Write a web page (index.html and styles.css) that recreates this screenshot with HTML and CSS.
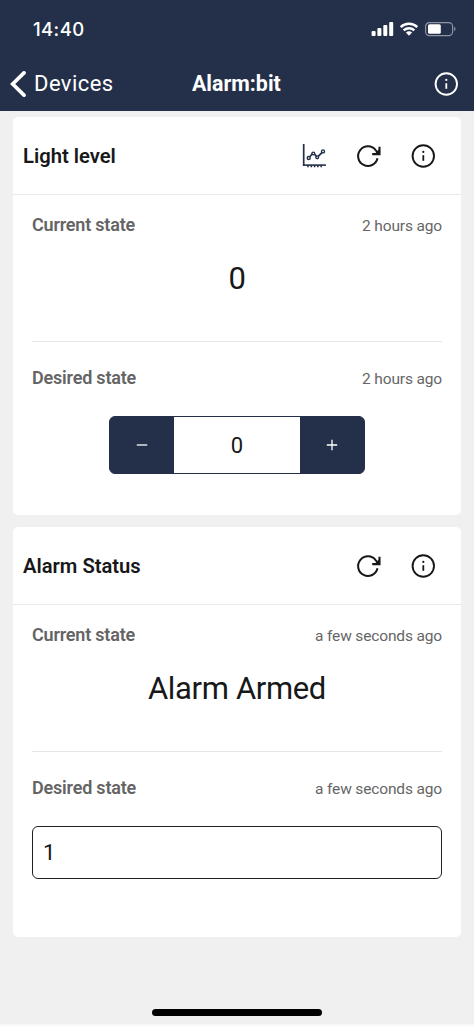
FILE: index.html
```html
<!DOCTYPE html>
<html lang="en">
<head>
<meta charset="utf-8">
<meta name="viewport" content="width=device-width">
<title>Alarm:bit</title>
<link rel="stylesheet" href="styles.css">
</head>
<body>
<svg class="defs" aria-hidden="true">
  <symbol id="info" viewBox="0 0 26 26">
    <circle cx="13.3" cy="13" r="10.7" fill="none" stroke="currentColor" stroke-width="1.9"/>
    <circle cx="13.3" cy="8.9" r="1.1" fill="currentColor"/>
    <path d="M13.3 12.2v5.6" stroke="currentColor" stroke-width="1.8"/>
  </symbol>
  <symbol id="reload" viewBox="0 0 26 26">
    <path d="M22.5 15.3A9.8 9.8 0 1 1 20.8 7.3L24 10.8" fill="none" stroke="currentColor" stroke-width="2"/>
    <path d="M24.5 3.8V11.1H17.2" fill="none" stroke="currentColor" stroke-width="2.1"/>
    <path d="M24.5 6v5.1h-5.1z" fill="currentColor"/>
  </symbol>
</svg>
<header class="topbar">
  <div class="statusbar">
    <span class="clock">14:40</span>
    <svg class="signals" width="86" height="16" viewBox="0 0 86 16">
      <g fill="#fff">
        <rect x="0.6" y="9" width="4" height="5" rx="1"/>
        <rect x="6.4" y="6" width="4" height="8" rx="1"/>
        <rect x="12.3" y="3" width="4" height="11" rx="1"/>
        <rect x="18.2" y="0" width="4" height="14" rx="1"/>
        <path d="M38 13.8l-3.1-3.2a4.4 4.4 0 0 1 6.2 0z"/>
        <rect x="57" y="2.2" width="12.8" height="9.6" rx="1.6"/>
      </g>
      <g fill="none" stroke="#fff" stroke-width="2.5">
        <path d="M29.7 5.1a12 12 0 0 1 16.6 0"/>
        <path d="M32.7 8.4a7.7 7.7 0 0 1 10.6 0"/>
      </g>
      <rect x="54.6" y=".6" width="27" height="13" rx="3.8" fill="none" stroke="#8d95a4" stroke-width="1.2"/>
      <path d="M83.2 4.8c1.7.6 1.7 3.8 0 4.4z" fill="#8d95a4"/>
    </svg>
  </div>
  <nav class="navbar">
    <a class="back">
      <svg width="16" height="26" viewBox="0 0 16 26"><path d="M14 1.9L2.7 13 14 24.1" fill="none" stroke="#fff" stroke-width="3.7" stroke-linecap="round"/></svg>
      <span class="back-label">Devices</span>
    </a>
    <h1 class="title">Alarm:bit</h1>
    <svg class="icon nav-info"><use href="#info"/></svg>
  </nav>
</header>
<main class="content">
  <section class="card">
    <div class="card-head">
      <h2 class="card-title">Light level</h2>
      <svg class="icon chart" viewBox="0 0 26 26">
        <g fill="none" stroke="#243049">
          <path d="M3.7 1V22.8" stroke-width="1.7"/>
          <path d="M2.9 22.1H25.9" stroke-width="1.6"/>
          <path d="M8 22v2.3M11.3 22v2.3M14.6 22v2.3M17.9 22v2.3M21.2 22v2.3" stroke-width="1.6"/>
          <path d="M9.8 13.8l2.6-3M14.4 11l2.1 2.4M18.2 13.4l4-4.1" stroke-width="1.7"/>
          <circle cx="8.7" cy="15" r="1.5" stroke-width="1.4"/>
          <circle cx="13.3" cy="10.5" r="1.4" stroke-width="1.4"/>
          <circle cx="17.2" cy="14.3" r="1.4" stroke-width="1.4"/>
          <circle cx="23" cy="8.4" r="1.5" stroke-width="1.4"/>
        </g>
      </svg>
      <svg class="icon"><use href="#reload"/></svg>
      <svg class="icon"><use href="#info"/></svg>
    </div>
    <div class="state current">
      <div class="row"><span class="label">Current state</span><span class="time">2 hours ago</span></div>
      <div class="value">0</div>
    </div>
    <div class="state desired">
      <div class="row"><span class="label">Desired state</span><span class="time">2 hours ago</span></div>
      <div class="stepper">
        <span class="step"><svg width="12" height="12"><path d="M.8 6h10.4" stroke="#fff" stroke-width="1.3"/></svg></span>
        <span class="step-value">0</span>
        <span class="step"><svg width="12" height="12"><path d="M.8 6h10.4M6 .8v10.4" stroke="#fff" stroke-width="1.3"/></svg></span>
      </div>
    </div>
  </section>
  <section class="card">
    <div class="card-head">
      <h2 class="card-title">Alarm Status</h2>
      <svg class="icon"><use href="#reload"/></svg>
      <svg class="icon"><use href="#info"/></svg>
    </div>
    <div class="state current">
      <div class="row"><span class="label">Current state</span><span class="time">a few seconds ago</span></div>
      <div class="value">Alarm Armed</div>
    </div>
    <div class="state desired last">
      <div class="row"><span class="label">Desired state</span><span class="time">a few seconds ago</span></div>
      <div class="field">1</div>
    </div>
  </section>
</main>
<footer class="home"><div class="home-bar"></div></footer>
</body>
</html>
```

FILE: styles.css
```css
* { box-sizing: border-box; }

body {
  margin: 0;
  height: 1026px;
  display: flex;
  flex-direction: column;
  background: #f0f0f0;
  color: #17181a;
  font-family: Roboto, "Liberation Sans", sans-serif;
  overflow: hidden;
}

.defs { position: absolute; width: 0; height: 0; }
.icon { width: 26px; height: 26px; display: block; flex: none; }

.topbar {
  height: 111px;
  background: #243049;
  color: #fff;
}

.statusbar {
  height: 58px;
  padding: 0 17px 0 33px;
  display: flex;
  align-items: center;
  justify-content: space-between;
}

.clock {
  font: 500 18.5px/24px Inter, sans-serif;
  letter-spacing: 0.4px;
}

.signals { margin-top: 2px; }

.navbar {
  height: 52px;
  padding: 0 15px 0 10px;
  display: grid;
  grid-template-columns: 182px 1fr 26px;
  align-items: center;
}

.back { display: flex; align-items: center; gap: 8px; }
.back-label { font-size: 22px; line-height: 26px; letter-spacing: 0.45px; }
.title { margin: 0; font-size: 21.4px; line-height: 26px; font-weight: 700; }

.content {
  padding: 6px 13px 0;
  display: flex;
  flex-direction: column;
  gap: 12px;
}

.card {
  background: #fff;
  border-radius: 5px;
}

.card-head {
  height: 78px;
  padding: 0 25px 0 10px;
  display: flex;
  align-items: center;
  gap: 29px;
  border-bottom: 1px solid #e9e9e9;
}

.card-title {
  margin: 0;
  flex: 1;
  font-size: 20.2px;
  line-height: 26px;
  font-weight: 600;
}

.state { margin: 0 19px; }

.current {
  height: 147px;
  border-bottom: 1px solid #e6e6e6;
}

.row {
  padding-top: 18px;
  display: flex;
  justify-content: space-between;
}

.label {
  font-size: 18px;
  line-height: 24px;
  font-weight: 600;
  letter-spacing: -0.2px;
  color: #646464;
}

.time {
  font-size: 15.5px;
  line-height: 26px;
  letter-spacing: -0.15px;
  color: #666;
}

.value {
  margin-top: 20px;
  text-align: center;
  font-size: 31px;
  line-height: 40px;
  letter-spacing: -0.35px;
}

.desired { padding-top: 6px; height: 173px; }
.last { height: 185px; }

.stepper {
  width: 256px;
  height: 58px;
  margin: 24px auto 0;
  display: grid;
  grid-template-columns: 64px 1fr 64px;
  border: 1px solid #243049;
  border-radius: 6px;
  background: #243049;
}

.step { display: grid; place-items: center; }

.step-value {
  height: 56px;
  padding-top: 1px;
  background: #fff;
  text-align: center;
  font-size: 22px;
  line-height: 55px;
}

.field {
  height: 53px;
  margin-top: 24px;
  padding-left: 10px;
  border: 1px solid #202124;
  border-radius: 6px;
  font-size: 22px;
  line-height: 51px;
}

.home {
  flex: 1;
  display: flex;
  align-items: flex-end;
  justify-content: center;
  padding-bottom: 8px;
  border-bottom: 2px solid #f8f8f8;
}

.home-bar {
  width: 170px;
  height: 7px;
  border-radius: 4px;
  background: #000;
}
```
